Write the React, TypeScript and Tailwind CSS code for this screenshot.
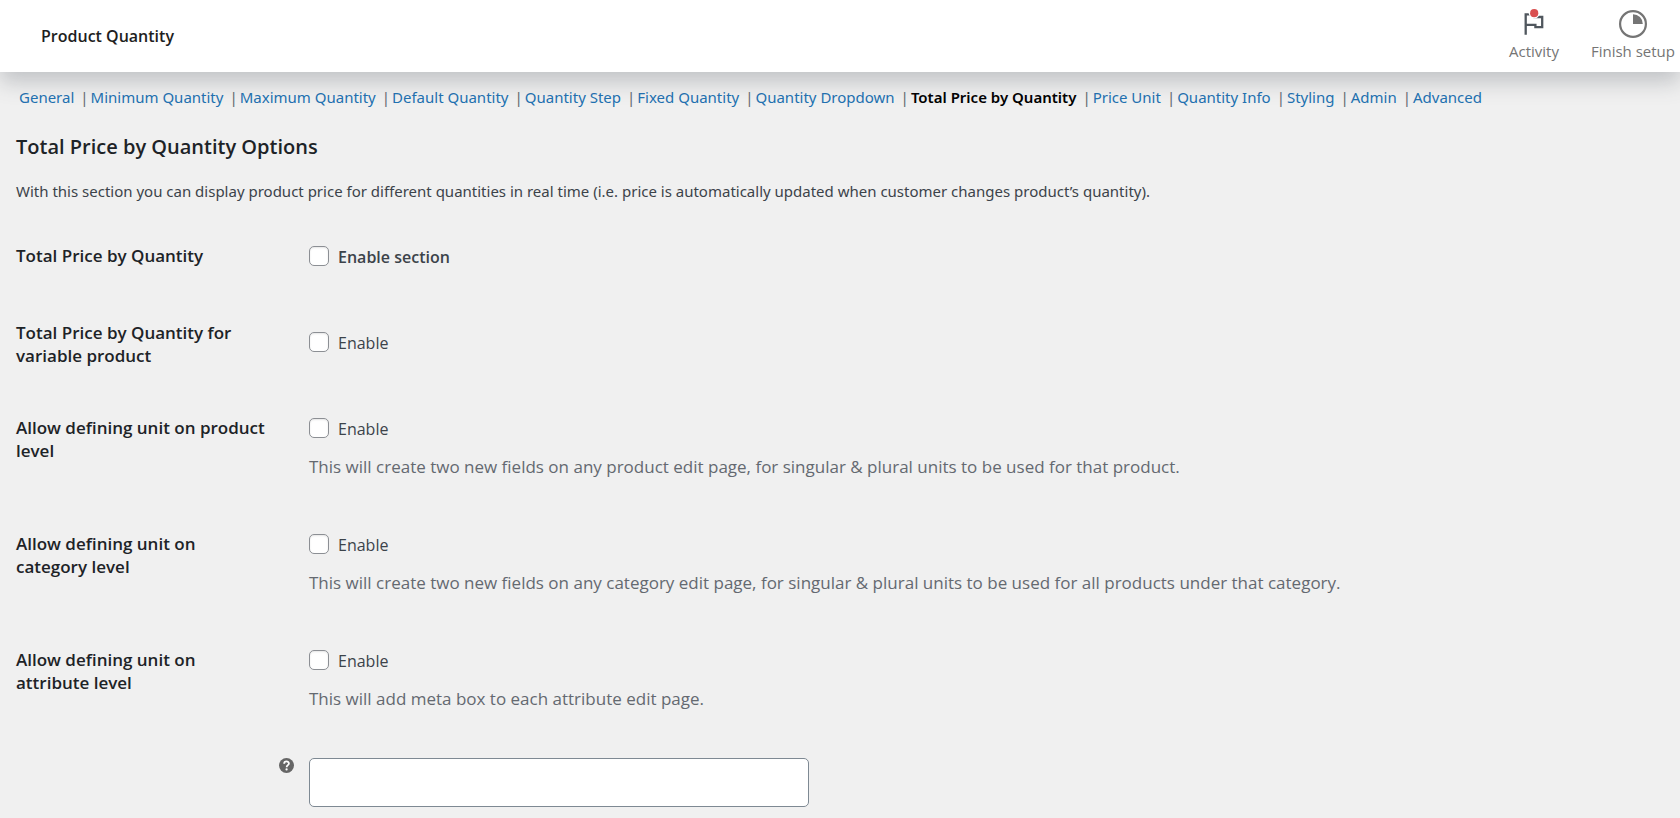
import clsx from 'clsx';

const sections = [
  'General',
  'Minimum Quantity',
  'Maximum Quantity',
  'Default Quantity',
  'Quantity Step',
  'Fixed Quantity',
  'Quantity Dropdown',
  'Total Price by Quantity',
  'Price Unit',
  'Quantity Info',
  'Styling',
  'Admin',
  'Advanced',
];

const currentSection = 'Total Price by Quantity';

type Option = {
  id: string;
  title: string;
  label: string;
  strong?: boolean;
  description?: string;
};

const options: Option[] = [
  { id: 'total_price', title: 'Total Price by Quantity', label: 'Enable section', strong: true },
  { id: 'total_price_variable', title: 'Total Price by Quantity for variable product', label: 'Enable' },
  {
    id: 'unit_product',
    title: 'Allow defining unit on product level',
    label: 'Enable',
    description: 'This will create two new fields on any product edit page, for singular & plural units to be used for that product.',
  },
  {
    id: 'unit_category',
    title: 'Allow defining unit on category level',
    label: 'Enable',
    description:
      'This will create two new fields on any category edit page, for singular & plural units to be used for all products under that category.',
  },
  {
    id: 'unit_attribute',
    title: 'Allow defining unit on attribute level',
    label: 'Enable',
    description: 'This will add meta box to each attribute edit page.',
  },
];

function FlagIcon() {
  return (
    <svg className="h-7 w-7 overflow-visible" viewBox="0 0 28 28" fill="none" aria-hidden="true">
      <path d="M5.7 3.2V24.8M5.7 4.4H14.5V7H22.2V17.2H15.4V14.8H5.7" stroke="#50575e" strokeWidth="2.3" />
      <circle cx="14.2" cy="3.2" r="5.4" fill="#fff" />
      <circle cx="14.2" cy="3.2" r="4.1" fill="#d94f4f" />
    </svg>
  );
}

function ProgressIcon() {
  return (
    <svg className="h-7 w-7" viewBox="0 0 28 28" fill="none" aria-hidden="true">
      <circle cx="14" cy="14" r="12.9" stroke="#757575" strokeWidth="2.2" />
      <path d="M14 14V4.2A9.8 9.8 0 0 1 23.8 14Z" fill="#757575" />
    </svg>
  );
}

function Header() {
  return (
    <header className="relative flex items-center justify-between bg-white pr-[5px] pl-[41px] shadow-[0_10px_20px_rgba(85,93,102,0.3)]">
      <h1 className="text-base font-semibold text-[#1e1e1e]">Product Quantity</h1>
      <div className="flex gap-8 text-[15px] leading-5 text-[#757575]">
        <button type="button" className="flex flex-col items-center gap-[3px] pt-[10px] pb-[11px]">
          <FlagIcon />
          Activity
        </button>
        <button type="button" className="flex flex-col items-center gap-[3px] pt-[10px] pb-[11px]">
          <ProgressIcon />
          Finish setup
        </button>
      </div>
    </header>
  );
}

function SectionNav() {
  return (
    <nav className="font-['Noto_Sans',sans-serif] text-[15px] leading-5">
      <ul className="flex flex-wrap gap-x-[2px] pl-[3px]">
        {sections.map((name, i) => (
          <li key={name}>
            <a href="#" className={clsx(name === currentSection ? 'font-semibold text-black' : 'text-[#2271b1]')}>
              {name}
            </a>
            {i < sections.length - 1 && <span className="ml-1.5 text-[#646970]">|</span>}
          </li>
        ))}
      </ul>
    </nav>
  );
}

function OptionRow({ option }: { option: Option }) {
  return (
    <tr>
      <th scope="row" className="w-[293px] pt-6 pr-10 pb-[25px] text-left align-top leading-[23px] font-semibold text-[#1d2327]">
        {option.title}
      </th>
      <td className="pt-[26px] pb-[31px] align-middle">
        <div className="flex items-start gap-[9px]">
          <input
            type="checkbox"
            id={option.id}
            className="h-5 w-5 appearance-none rounded-[5px] border border-[#8c8f94] bg-white shadow-[inset_0_1px_2px_rgba(0,0,0,0.1)] checked:bg-[#2271b1]"
          />
          <label htmlFor={option.id} className={clsx('-mb-0.5 text-base leading-[22px]', option.strong && 'font-semibold')}>
            {option.label}
          </label>
        </div>
        {option.description && <p className="mt-[19px] leading-5 text-[#646970]">{option.description}</p>}
      </td>
    </tr>
  );
}

function HelpTip() {
  return (
    <svg className="ml-auto h-[15px] w-[15px]" viewBox="0 0 20 20" aria-hidden="true">
      <circle cx="10" cy="10" r="10" fill="#666" />
      <path d="M6.9 7.5C6.9 3.6 13.2 3.7 13.2 7.3C13.2 9.6 10.2 9.5 10.2 12.2" fill="none" stroke="#fff" strokeWidth="2.4" />
      <circle cx="10.1" cy="15.2" r="1.5" fill="#fff" />
    </svg>
  );
}

function App() {
  return (
    <div className="min-h-screen bg-[#f0f0f0] font-['Open_Sans',sans-serif] text-[#3c434a]">
      <Header />
      <main className="px-4 pt-[15px]">
        <SectionNav />
        <h2 className="mt-[26px] text-xl leading-7 font-semibold text-[#1d2327]">Total Price by Quantity Options</h2>
        <p className="mt-[18px] font-['Noto_Sans',sans-serif] text-[15px] leading-6">
          With this section you can display product price for different quantities in real time (i.e. price is automatically updated when customer
          changes product’s quantity).
        </p>
        <table className="mt-[17px] w-full text-[17px]">
          <tbody>
            {options.map((option) => (
              <OptionRow key={option.id} option={option} />
            ))}
            <tr>
              <th scope="row" className="pt-[18px] pr-[15px] align-top">
                <HelpTip />
              </th>
              <td className="pt-[18px]">
                <textarea
                  aria-label="Template"
                  rows={1}
                  className="block h-[49px] w-full max-w-[500px] resize-none rounded-[5px] border border-[#7e8993] bg-white px-3 py-2"
                />
              </td>
            </tr>
          </tbody>
        </table>
      </main>
    </div>
  );
}

export default App;
